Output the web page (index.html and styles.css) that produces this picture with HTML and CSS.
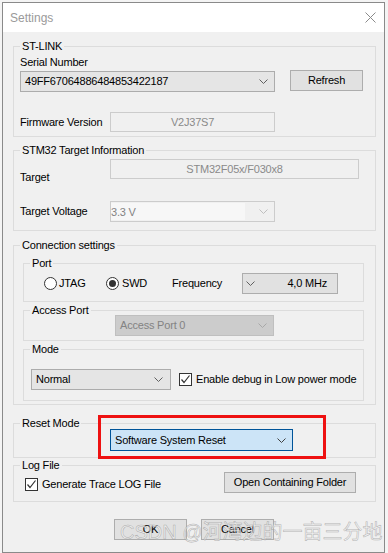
FILE: index.html
```html
<!DOCTYPE html>
<html>
<head>
<meta charset="utf-8">
<link rel="stylesheet" href="styles.css">
</head>
<body>
<div class="window">
  <div class="titlebar">
    <span class="title">Settings</span>
    <svg class="close" width="11" height="11" viewBox="0 0 11 11"><path d="M0.5 0.5 L10.5 10.5 M10.5 0.5 L0.5 10.5" stroke="#8a8a8a" stroke-width="1" fill="none"/></svg>
  </div>
  <div class="client">
    <fieldset class="grp g-stlink">
      <legend>ST-LINK</legend>
      <div class="lbl-serial">Serial Number</div>
      <div class="row row-serial">
        <div class="combo c-serial"><span class="ctext">49FF67064886484853422187</span><svg class="chev" width="9" height="5" viewBox="0 0 9 5"><polyline points="0.5,0.5 4.5,4.5 8.5,0.5" fill="none" stroke="#606060"/></svg></div>
        <div class="btn b-refresh">Refresh</div>
      </div>
      <div class="row row-fw">
        <span class="lbl col90">Firmware Version</span>
        <div class="field f-fw">V2J37S7</div>
      </div>
    </fieldset>

    <fieldset class="grp g-stm32">
      <legend>STM32 Target Information</legend>
      <div class="row row-target">
        <span class="lbl col90 lbl-target">Target</span>
        <div class="field f-target">STM32F05x/F030x8</div>
      </div>
      <div class="row row-volt">
        <span class="lbl col90">Target Voltage</span>
        <div class="combo disabled c-volt"><span class="ctext edit">3.3 V</span><svg class="chev" width="9" height="5" viewBox="0 0 9 5"><polyline points="0.5,0.5 4.5,4.5 8.5,0.5" fill="none" stroke="#bfbfbf"/></svg></div>
      </div>
    </fieldset>

    <fieldset class="grp g-conn">
      <legend>Connection settings</legend>
      <fieldset class="grp sub g-port">
        <legend>Port</legend>
        <div class="row row-port">
          <span class="radio r-jtag"><span class="rb"></span>JTAG</span>
          <span class="radio r-swd"><span class="rb on"></span>SWD</span>
          <span class="lbl freq-lbl">Frequency</span>
          <div class="combo c-freq"><svg class="chev" width="9" height="5" viewBox="0 0 9 5"><polyline points="0.5,0.5 4.5,4.5 8.5,0.5" fill="none" stroke="#606060"/></svg><span class="ctext">4,0 MHz</span></div>
        </div>
      </fieldset>
      <fieldset class="grp sub g-ap">
        <legend>Access Port</legend>
        <div class="combo greyed c-ap"><span class="ctext">Access Port 0</span><svg class="chev" width="9" height="5" viewBox="0 0 9 5"><polyline points="0.5,0.5 4.5,4.5 8.5,0.5" fill="none" stroke="#a8a8a8"/></svg></div>
      </fieldset>
      <fieldset class="grp sub g-mode">
        <legend>Mode</legend>
        <div class="row row-mode">
          <div class="combo c-mode"><span class="ctext">Normal</span><svg class="chev" width="9" height="5" viewBox="0 0 9 5"><polyline points="0.5,0.5 4.5,4.5 8.5,0.5" fill="none" stroke="#606060"/></svg></div>
          <span class="check cb-lp"><span class="cb"><svg width="11" height="11" viewBox="0 0 11 11"><polyline points="1.5,5.5 4,8.5 9.5,1.5" fill="none" stroke="#333" stroke-width="1.2"/></svg></span>Enable debug in Low power mode</span>
        </div>
      </fieldset>
    </fieldset>

    <fieldset class="grp g-reset">
      <legend>Reset Mode</legend>
      <div class="combo sel c-reset"><span class="ctext">Software System Reset</span><svg class="chev" width="9" height="5" viewBox="0 0 9 5"><polyline points="0.5,0.5 4.5,4.5 8.5,0.5" fill="none" stroke="#404040"/></svg></div>
      <div class="highlight"></div>
    </fieldset>

    <fieldset class="grp g-log">
      <legend>Log File</legend>
      <div class="row row-log">
        <span class="check cb-log"><span class="cb"><svg width="11" height="11" viewBox="0 0 11 11"><polyline points="1.5,5.5 4,8.5 9.5,1.5" fill="none" stroke="#333" stroke-width="1.2"/></svg></span>Generate Trace LOG File</span>
        <div class="btn b-folder">Open Containing Folder</div>
      </div>
    </fieldset>

    <div class="row row-buttons">
      <div class="btn b-ok">OK</div>
      <div class="btn b-cancel">Cancel</div>
    </div>
  </div>
  <div class="watermark">CSDN @河湾边的一亩三分地</div>
</div>
</body>
</html>
```

FILE: styles.css
```css
html, body {
  margin: 0;
  padding: 0;
}
body {
  background: #f4f4f4;
  font-family: "Liberation Sans", Arial, sans-serif;
  font-size: 11px;
  letter-spacing: -0.2px;
  color: #000;
  width: 388px;
  height: 553px;
  overflow: hidden;
}
.window {
  position: relative;
  box-sizing: border-box;
  margin: 2px 0 0 2px;
  width: 383px;
  height: 551px;
  border: 1px solid #8a8a8a;
  background: #f0f0f0;
}
.titlebar {
  height: 29px;
  background: #fff;
  display: flex;
  align-items: center;
  justify-content: space-between;
  padding: 0 8px 0 7px;
}
.title {
  font-size: 12px;
  letter-spacing: 0;
  color: #9a9a9a;
  margin-top: 1px;
}
.close {
  display: block;
  margin-top: -1px;
}
.client {
  padding: 0 8px 0 10px;
}
.grp {
  margin: 0;
  border: 1px solid #dcdcdc;
  padding: 0 6px;
  min-width: 0;
}
.grp legend {
  padding: 0 2px;
  line-height: 13px;
}
.row {
  display: flex;
  align-items: center;
}
.lbl {
  line-height: 13px;
  white-space: nowrap;
}
.col90 {
  width: 90px;
  flex: none;
}
.combo, .field, .btn {
  box-sizing: border-box;
  line-height: 13px;
  white-space: nowrap;
}
.combo {
  height: 21px;
  display: flex;
  align-items: center;
  justify-content: space-between;
  background: #e5e5e5;
  border: 1px solid #acacac;
  padding: 0 6px 0 4px;
}
.chev {
  display: block;
  flex: none;
}
.field {
  height: 20px;
  border: 1px solid #cccccc;
  background: #f0f0f0;
  color: #8a8a8a;
  text-align: center;
  padding-top: 3px;
}
.btn {
  height: 21px;
  background: #e1e1e1;
  border: 1px solid #adadad;
  text-align: center;
  padding-top: 3px;
}

/* ST-LINK */
.g-stlink {
  margin-top: 8px;
  padding-bottom: 4px;
}
.lbl-serial {
  margin-top: 3px;
  line-height: 13px;
}
.row-serial {
  margin-top: 2px;
  align-items: flex-start;
}
.c-serial {
  width: 255px;
}
.b-refresh {
  width: 73px;
  margin-left: 15px;
  margin-top: -1px;
}
.row-fw {
  margin-top: 20px;
}
.f-fw {
  width: 165px;
}

/* STM32 */
.g-stm32 {
  margin-top: 7px;
  padding-bottom: 8px;
}
.row-target {
  margin-top: 2px;
  align-items: flex-start;
  height: 20px;
}
.lbl-target {
  padding-top: 12px;
}
.f-target {
  width: 249px;
}
.row-volt {
  margin-top: 22px;
}
.combo.disabled {
  width: 165px;
  background: #f0f0f0;
  border-color: #cccccc;
  color: #838383;
  padding: 0 6px 0 0;
}
.ctext.edit {
  align-self: stretch;
  flex: 1;
  margin: 1px 14px 1px 0;
  background: #f7f7f7;
  padding-top: 3px;
}

/* Connection */
.g-conn {
  margin-top: 8px;
  padding-bottom: 3px;
}
.g-conn .sub {
  margin-left: 3px;
  margin-right: 5px;
}
.g-port {
  margin-top: 5px;
  padding-bottom: 7px;
}
.row-port {
  margin-top: 3px;
  padding-left: 14px;
}
.radio {
  display: flex;
  align-items: center;
  flex: none;
  line-height: 13px;
}
.r-jtag { width: 62px; }
.r-swd { width: 66px; }
.rb {
  box-sizing: border-box;
  width: 13px;
  height: 13px;
  border: 1px solid #333;
  border-radius: 50%;
  background: #fff;
  margin-right: 2px;
  display: flex;
  align-items: center;
  justify-content: center;
}
.r-swd .rb { margin-right: 3px; }
.rb.on::after {
  content: "";
  width: 7px;
  height: 7px;
  border-radius: 50%;
  background: #333;
}
.freq-lbl {
  width: 70px;
  flex: none;
}
.c-freq {
  width: 96px;
  background: #e1e1e1;
  border-color: #adadad;
  padding: 0 10px 0 3px;
}
.g-ap {
  margin-top: 2px;
  padding-bottom: 4px;
}
.combo.greyed {
  background: #cccccc;
  border-color: #bfbfbf;
  color: #838383;
}
.c-ap {
  width: 159px;
  margin-left: 85px;
  margin-top: -2px;
}
.g-mode {
  margin-top: 2px;
  padding-bottom: 10px;
}
.row-mode {
  margin-top: 13px;
}
.c-mode {
  width: 140px;
  margin-left: 1px;
  padding-right: 7px;
}
.check {
  display: flex;
  align-items: center;
  line-height: 13px;
  white-space: nowrap;
}
.cb {
  box-sizing: border-box;
  width: 13px;
  height: 13px;
  border: 1px solid #333;
  background: #fff;
  display: flex;
  align-items: center;
  justify-content: center;
  margin-right: 4px;
  flex: none;
}
.cb svg { display: block; }
.cb-lp {
  margin-left: 8px;
}

/* Reset */
.g-reset {
  position: relative;
  margin-top: 12px;
  padding-bottom: 6px;
}
.c-reset {
  width: 183px;
  height: 22px;
  margin-left: 90px;
  margin-top: -1px;
  background: #cce4f7;
  border-color: #005499;
}
.highlight {
  position: absolute;
  left: 84px;
  top: -15px;
  width: 228px;
  height: 44px;
  box-sizing: border-box;
  border: 3px solid #ee1111;
}

/* Log */
.g-log {
  margin-top: 1px;
  padding-bottom: 8px;
}
.row-log {
  justify-content: space-between;
  padding-right: 13px;
}
.cb-log {
  margin-left: 5px;
  margin-top: 3px;
}
.b-folder {
  width: 132px;
}

/* bottom buttons */
.row-buttons {
  margin-top: 17px;
  padding-left: 101px;
}
.b-ok {
  width: 73px;
}
.b-cancel {
  width: 73px;
  margin-left: 14px;
}

.watermark {
  position: absolute;
  left: 117px;
  top: 513px;
  font-family: "Liberation Sans", "Noto Sans CJK SC", sans-serif;
  font-size: 20px;
  letter-spacing: 0;
  color: rgba(240, 240, 240, 0.7);
  -webkit-text-stroke: 0.5px rgba(130, 130, 130, 0.6);
  white-space: nowrap;
}
```
